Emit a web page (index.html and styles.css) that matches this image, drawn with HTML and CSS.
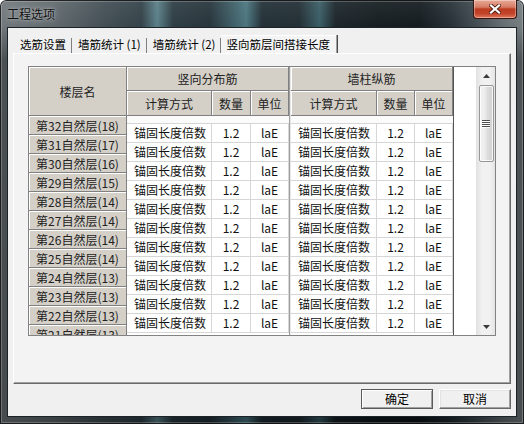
FILE: index.html
```html
<!DOCTYPE html>
<html lang="zh-CN">
<head>
<meta charset="utf-8">
<title>工程选项</title>
<link rel="stylesheet" href="styles.css">
</head>
<body>
<div class="window">
  <div class="titlebar">
    <span class="title">工程选项</span>
    <div class="close">
      <svg width="12" height="10" viewBox="0 0 12 10"><path d="M2 1.5 L10 8.5 M10 1.5 L2 8.5" stroke="#4a1a12" stroke-width="3.8" stroke-linecap="square"/><path d="M2 1.5 L10 8.5 M10 1.5 L2 8.5" stroke="#fff" stroke-width="2.2" stroke-linecap="square"/></svg>
    </div>
  </div>
  <div class="client">
    <div class="tabs">
      <div class="tab sepr">选筋设置</div>
      <div class="tab sepr">墙筋统计 (1)</div>
      <div class="tab sepr">墙筋统计 (2)</div>
      <div class="tab on">竖向筋层间搭接长度</div>
    </div>
    <div class="panel">
      <div class="grid">
        <div class="rhcol">
          <div class="hd corner">楼层名</div>
          <div class="hd rh">第32自然层(18)</div>
          <div class="hd rh">第31自然层(17)</div>
          <div class="hd rh">第30自然层(16)</div>
          <div class="hd rh">第29自然层(15)</div>
          <div class="hd rh">第28自然层(14)</div>
          <div class="hd rh">第27自然层(14)</div>
          <div class="hd rh">第26自然层(14)</div>
          <div class="hd rh">第25自然层(14)</div>
          <div class="hd rh">第24自然层(13)</div>
          <div class="hd rh">第23自然层(13)</div>
          <div class="hd rh">第22自然层(13)</div>
          <div class="hd rh">第21自然层(13)</div>
        </div>
        <div class="group">
          <div class="hd gh">竖向分布筋</div>
          <div class="subs"><div class="hd sh a1">计算方式</div><div class="hd sh a2">数量</div><div class="hd sh a3">单位</div></div>
          <div class="pad"></div>
          <div class="row"><div class="c a1 l">锚固长度倍数</div><div class="c a2">1.2</div><div class="c a3">laE</div></div>
          <div class="row"><div class="c a1 l">锚固长度倍数</div><div class="c a2">1.2</div><div class="c a3">laE</div></div>
          <div class="row"><div class="c a1 l">锚固长度倍数</div><div class="c a2">1.2</div><div class="c a3">laE</div></div>
          <div class="row"><div class="c a1 l">锚固长度倍数</div><div class="c a2">1.2</div><div class="c a3">laE</div></div>
          <div class="row"><div class="c a1 l">锚固长度倍数</div><div class="c a2">1.2</div><div class="c a3">laE</div></div>
          <div class="row"><div class="c a1 l">锚固长度倍数</div><div class="c a2">1.2</div><div class="c a3">laE</div></div>
          <div class="row"><div class="c a1 l">锚固长度倍数</div><div class="c a2">1.2</div><div class="c a3">laE</div></div>
          <div class="row"><div class="c a1 l">锚固长度倍数</div><div class="c a2">1.2</div><div class="c a3">laE</div></div>
          <div class="row"><div class="c a1 l">锚固长度倍数</div><div class="c a2">1.2</div><div class="c a3">laE</div></div>
          <div class="row"><div class="c a1 l">锚固长度倍数</div><div class="c a2">1.2</div><div class="c a3">laE</div></div>
          <div class="row"><div class="c a1 l">锚固长度倍数</div><div class="c a2">1.2</div><div class="c a3">laE</div></div>
        </div>
        <div class="sep"></div>
        <div class="group">
          <div class="hd gh">墙柱纵筋</div>
          <div class="subs"><div class="hd sh b1">计算方式</div><div class="hd sh b2">数量</div><div class="hd sh b3">单位</div></div>
          <div class="pad"></div>
          <div class="row"><div class="c b1 l">锚固长度倍数</div><div class="c b2">1.2</div><div class="c b3">laE</div></div>
          <div class="row"><div class="c b1 l">锚固长度倍数</div><div class="c b2">1.2</div><div class="c b3">laE</div></div>
          <div class="row"><div class="c b1 l">锚固长度倍数</div><div class="c b2">1.2</div><div class="c b3">laE</div></div>
          <div class="row"><div class="c b1 l">锚固长度倍数</div><div class="c b2">1.2</div><div class="c b3">laE</div></div>
          <div class="row"><div class="c b1 l">锚固长度倍数</div><div class="c b2">1.2</div><div class="c b3">laE</div></div>
          <div class="row"><div class="c b1 l">锚固长度倍数</div><div class="c b2">1.2</div><div class="c b3">laE</div></div>
          <div class="row"><div class="c b1 l">锚固长度倍数</div><div class="c b2">1.2</div><div class="c b3">laE</div></div>
          <div class="row"><div class="c b1 l">锚固长度倍数</div><div class="c b2">1.2</div><div class="c b3">laE</div></div>
          <div class="row"><div class="c b1 l">锚固长度倍数</div><div class="c b2">1.2</div><div class="c b3">laE</div></div>
          <div class="row"><div class="c b1 l">锚固长度倍数</div><div class="c b2">1.2</div><div class="c b3">laE</div></div>
          <div class="row"><div class="c b1 l">锚固长度倍数</div><div class="c b2">1.2</div><div class="c b3">laE</div></div>
        </div>
        <div class="filler"></div>
        <div class="vscroll">
          <div class="arrow"><svg width="7" height="4" viewBox="0 0 7 4"><path d="M0 4 L3.5 0 L7 4Z" fill="#3a3a3a"/></svg></div>
          <div class="thumb">
            <svg width="8" height="8" viewBox="0 0 8 8"><rect x="0" y="0" width="8" height="1" fill="#4e4e4e"/><rect x="0" y="1" width="8" height="1" fill="#fff"/><rect x="0" y="2" width="8" height="1" fill="#4e4e4e"/><rect x="0" y="3" width="8" height="1" fill="#fff"/><rect x="0" y="4" width="8" height="1" fill="#4e4e4e"/><rect x="0" y="5" width="8" height="1" fill="#fff"/><rect x="0" y="6" width="8" height="1" fill="#4e4e4e"/><rect x="0" y="7" width="8" height="1" fill="#fff"/></svg>
          </div>
          <div class="track"></div>
          <div class="arrow"><svg width="7" height="4" viewBox="0 0 7 4"><path d="M0 0 L3.5 4 L7 0Z" fill="#3a3a3a"/></svg></div>
        </div>
      </div>
    </div>
    <div class="buttons">
      <button class="btn def">确定</button>
      <button class="btn">取消</button>
    </div>
  </div>
</div>
</body>
</html>
```
FILE: styles.css
```css
* { box-sizing: border-box; }

body {
  margin: 0;
  background: #fff;
  font-family: "Noto Sans CJK SC", "Noto Sans", sans-serif;
  font-size: 12px;
  color: #000;
}

.window {
  width: 524px;
  height: 424px;
  padding: 0 7px 7px;
  display: flex;
  flex-direction: column;
  border-radius: 6px 6px 0 0;
  background:
    linear-gradient(180deg, rgba(255,255,255,0.10) 0, rgba(255,255,255,0.04) 26px, rgba(0,0,0,0.30) 60px, rgba(0,0,0,0.35) 100%),
    linear-gradient(90deg, #6d7478 0%, #5b6468 10%, #3c484e 20%, #2c3b42 27%, #557b84 30%, #26363d 33%, #1f2d34 40%, #44707a 47%, #1b2930 50%, #1a262d 57%, #33575f 61%, #141e23 64%, #0e161a 72%, #0c1317 80%, #1e292f 86%, #3c474c 91%, #5f686c 96%, #737b7f 100%);
  box-shadow: inset 0 0 0 1px rgba(0,0,0,0.75), inset 0 0 0 2px rgba(255,255,255,0.22);
}

.titlebar {
  height: 27px;
  flex: none;
  display: flex;
  justify-content: space-between;
  align-items: center;
}

.title {
  font-size: 12px;
  color: #111;
  text-shadow: 0 0 6px rgba(255,255,255,0.55), 0 0 2px rgba(255,255,255,0.45);
}

.close {
  align-self: flex-start;
  width: 44px;
  height: 19px;
  display: flex;
  align-items: center;
  justify-content: center;
  border: 1px solid #3a1510;
  border-top: none;
  border-radius: 0 0 4px 4px;
  background: linear-gradient(180deg, #e9a996 0%, #d67b64 40%, #bd3c20 50%, #c3432a 75%, #e0775a 100%);
  box-shadow: inset 0 0 0 1px rgba(255,255,255,0.35);
}

.client {
  flex: 1;
  border: 1px solid #1c2328;
  background: #f0f0f0;
  padding: 5px 5px 7px;
  display: flex;
  flex-direction: column;
}

.tabs {
  height: 20px;
  flex: none;
  display: flex;
  align-items: flex-end;
  padding-left: 1px;
  font-size: 11.5px;
}

.tab {
  height: 18px;
  line-height: 18px;
  padding: 0 6px;
  white-space: nowrap;
}

.tab.sepr {
  background: linear-gradient(#7f7f7f, #7f7f7f) right bottom / 1px 15px no-repeat;
}

.tab.on {
  background: #f4f4f4;
  border-right: 1px solid #4a4a4a;
  box-shadow: inset -1px 0 #a0a0a0, inset 0 1px #fff;
  padding: 0 7px 0 5px;
}

.panel {
  height: 331px;
  flex: none;
  border: 1px solid;
  border-color: #fff #696969 #696969 #fff;
  box-shadow: inset -1px -1px #a0a0a0;
  background: #f3f3f3;
  padding: 12px 0 0 14px;
}

.grid {
  display: flex;
  width: 468px;
  height: 270px;
  border: 1px solid #828282;
  background: #fff;
  overflow: hidden;
}

.hd {
  background: #d4d0c8;
  border-right: 1px solid #808080;
  border-bottom: 1px solid #808080;
  box-shadow: inset 1px 1px #fff;
  display: flex;
  align-items: center;
  justify-content: center;
  color: #222;
  white-space: nowrap;
  flex: none;
}

.rhcol {
  width: 98px;
  flex: none;
  display: flex;
  flex-direction: column;
}

.corner { height: 49px; }
.rh { height: 19px; }

.group {
  width: 162px;
  flex: none;
  display: flex;
  flex-direction: column;
}

.gh { height: 24px; }

.subs {
  display: flex;
  height: 25px;
  flex: none;
}

.sh { height: 25px; }

.pad {
  height: 8px;
  flex: none;
  background: #fbfbfb;
  border-bottom: 1px solid #d6d6d6;
}

.row {
  display: flex;
  height: 19px;
  flex: none;
}

.c {
  height: 19px;
  flex: none;
  border-right: 1px solid #d6d6d6;
  border-bottom: 1px solid #d6d6d6;
  line-height: 18px;
  text-align: center;
  color: #111;
  white-space: nowrap;
  overflow: hidden;
}

.c.l {
  text-align: left;
  padding-left: 7px;
}

.a1 { width: 85px; }
.a2 { width: 39px; }
.a3 { width: 38px; }
.b1 { width: 86px; }
.b2 { width: 38px; }
.b3 { width: 38px; }

.sep {
  width: 2px;
  flex: none;
  background: linear-gradient(90deg, #a0a0a0 50%, #e6e6e6 50%);
}

.filler {
  width: 23px;
  flex: none;
  border-left: 1px solid #555;
  background: #fff;
}

.vscroll {
  width: 19px;
  flex: none;
  border-left: 1px solid #e2e2e2;
  background: linear-gradient(90deg, #e4e4e4, #f1f1f1 30%, #f1f1f1 70%, #e4e4e4);
  display: flex;
  flex-direction: column;
  align-items: center;
}

.arrow {
  height: 17px;
  width: 100%;
  flex: none;
  display: flex;
  align-items: center;
  justify-content: center;
}

.thumb {
  width: 15px;
  height: 77px;
  flex: none;
  margin-top: 1px;
  border: 1px solid #979797;
  border-radius: 2px;
  background: linear-gradient(90deg, #f4f4f4, #e9e9e9 45%, #dcdcdc 55%, #d2d2d2);
  box-shadow: inset 0 0 0 1px rgba(255,255,255,0.8);
  display: flex;
  align-items: center;
  justify-content: center;
}

.track { flex: 1; }

.buttons {
  display: flex;
  justify-content: flex-end;
  gap: 6px;
  margin-top: 5px;
}

.btn {
  width: 72px;
  height: 20px;
  padding: 0;
  font-family: inherit;
  font-size: 12px;
  line-height: 18px;
  color: #000;
  background: #f0f0f0;
  border: 1px solid;
  border-color: #fff #696969 #696969 #fff;
  box-shadow: inset -1px -1px #a0a0a0, inset 1px 1px #e3e3e3;
}

.btn.def {
  border-color: #5a5a5a;
  box-shadow: inset 1px 1px #fff, inset -1px -1px #a0a0a0;
}
```
